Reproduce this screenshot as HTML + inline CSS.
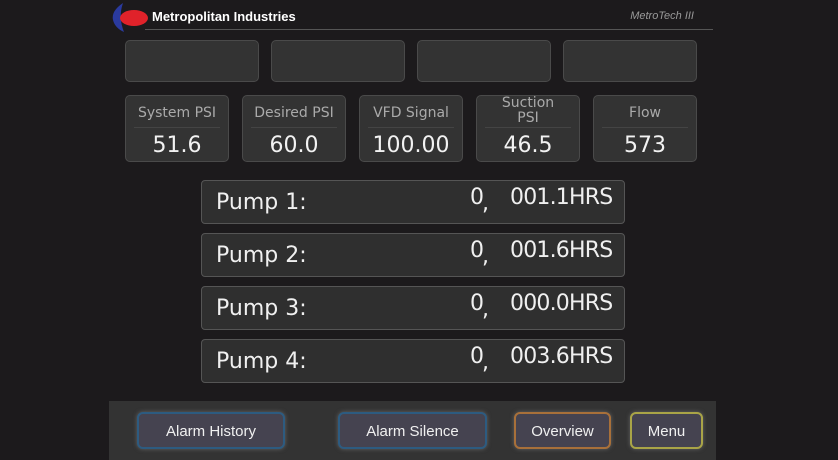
<!DOCTYPE html>
<html><head><style>
*{margin:0;padding:0;box-sizing:border-box}
body{width:838px;height:460px;background:#1c1a1c;font-family:"DejaVu Sans","Liberation Sans",sans-serif;position:relative;overflow:hidden;color:#eee}
.a{position:absolute}
.box{position:absolute;background:#333;border:1px solid #4a4a4a;border-radius:5px}
.lbl{position:absolute;left:8px;right:8px;top:2px;height:30px;border-bottom:1px solid #444;color:#aaa;font-size:14px;text-align:center;line-height:30px}
.val{position:absolute;left:0;right:0;top:37px;text-align:center;font-size:22px;color:#f2f2f2}
.pump{position:absolute;left:201px;width:424px;height:44px;background:#2f2f2f;border:1px solid #555;border-radius:4px;font-size:22px;color:#f0f0f0}
.btn{position:absolute;top:412px;height:37px;background:#454350;border-radius:6px;color:#f0f0f0;font-family:"Liberation Sans",sans-serif;font-size:15px;text-align:center;line-height:35px}
</style></head><body>
<svg class="a" style="left:110px;top:1px" width="40" height="32"><path d="M13 2 Q1 10 3 19 Q5 27 14 31 Q8 16 13 2Z" fill="#2a3a9e"/><ellipse cx="24" cy="17" rx="14" ry="8" fill="#e0222a"/></svg>
<div class="a" style="left:152px;top:9px;font-family:'Liberation Sans',sans-serif;font-weight:bold;font-size:13px;color:#fff">Metropolitan Industries</div>
<div class="a" style="left:600px;top:10px;width:94px;text-align:right;font-family:'Liberation Sans',sans-serif;font-style:italic;font-size:11px;color:#999">MetroTech III</div>
<div class="a" style="left:145px;top:29px;width:568px;height:1px;background:#555"></div>

<div class="box" style="left:125px;top:40px;width:134px;height:42px"></div>
<div class="box" style="left:271px;top:40px;width:134px;height:42px"></div>
<div class="box" style="left:417px;top:40px;width:134px;height:42px"></div>
<div class="box" style="left:563px;top:40px;width:134px;height:42px"></div>

<div class="box" style="left:125px;top:95px;width:104px;height:67px"><div class="lbl">System PSI</div><div class="val">51.6</div></div>
<div class="box" style="left:242px;top:95px;width:104px;height:67px"><div class="lbl">Desired PSI</div><div class="val">60.0</div></div>
<div class="box" style="left:359px;top:95px;width:104px;height:67px"><div class="lbl">VFD Signal</div><div class="val">100.00</div></div>
<div class="box" style="left:476px;top:95px;width:104px;height:67px"><div class="lbl" style="line-height:15px;padding-top:0;top:0;height:32px">Suction<br>PSI</div><div class="val">46.5</div></div>
<div class="box" style="left:593px;top:95px;width:104px;height:67px"><div class="lbl">Flow</div><div class="val">573</div></div>

<div class="pump" style="top:180px"><span class="a" style="left:14px;top:9px">Pump 1:</span><span class="a" style="left:268px;top:4px">0</span><span class="a" style="left:280px;top:10px">,</span><span class="a" style="left:308px;top:4px;letter-spacing:-0.8px">001.1HRS</span></div>
<div class="pump" style="top:233px"><span class="a" style="left:14px;top:9px">Pump 2:</span><span class="a" style="left:268px;top:4px">0</span><span class="a" style="left:280px;top:10px">,</span><span class="a" style="left:308px;top:4px;letter-spacing:-0.8px">001.6HRS</span></div>
<div class="pump" style="top:286px"><span class="a" style="left:14px;top:9px">Pump 3:</span><span class="a" style="left:268px;top:4px">0</span><span class="a" style="left:280px;top:10px">,</span><span class="a" style="left:308px;top:4px;letter-spacing:-0.8px">000.0HRS</span></div>
<div class="pump" style="top:339px"><span class="a" style="left:14px;top:9px">Pump 4:</span><span class="a" style="left:268px;top:4px">0</span><span class="a" style="left:280px;top:10px">,</span><span class="a" style="left:308px;top:4px;letter-spacing:-0.8px">003.6HRS</span></div>

<div class="a" style="left:109px;top:401px;width:607px;height:59px;background:#333"></div>
<div class="btn" style="left:137px;width:148px;border:2px solid #2d5b80;box-shadow:0 0 4px #666">Alarm History</div>
<div class="btn" style="left:338px;width:149px;border:2px solid #2d5b80;box-shadow:0 0 4px #666">Alarm Silence</div>
<div class="btn" style="left:514px;width:97px;border:2px solid #a8703a;box-shadow:0 0 4px #666">Overview</div>
<div class="btn" style="left:630px;width:73px;border:2px solid #a9a447;box-shadow:0 0 4px #666">Menu</div>
</body></html>
